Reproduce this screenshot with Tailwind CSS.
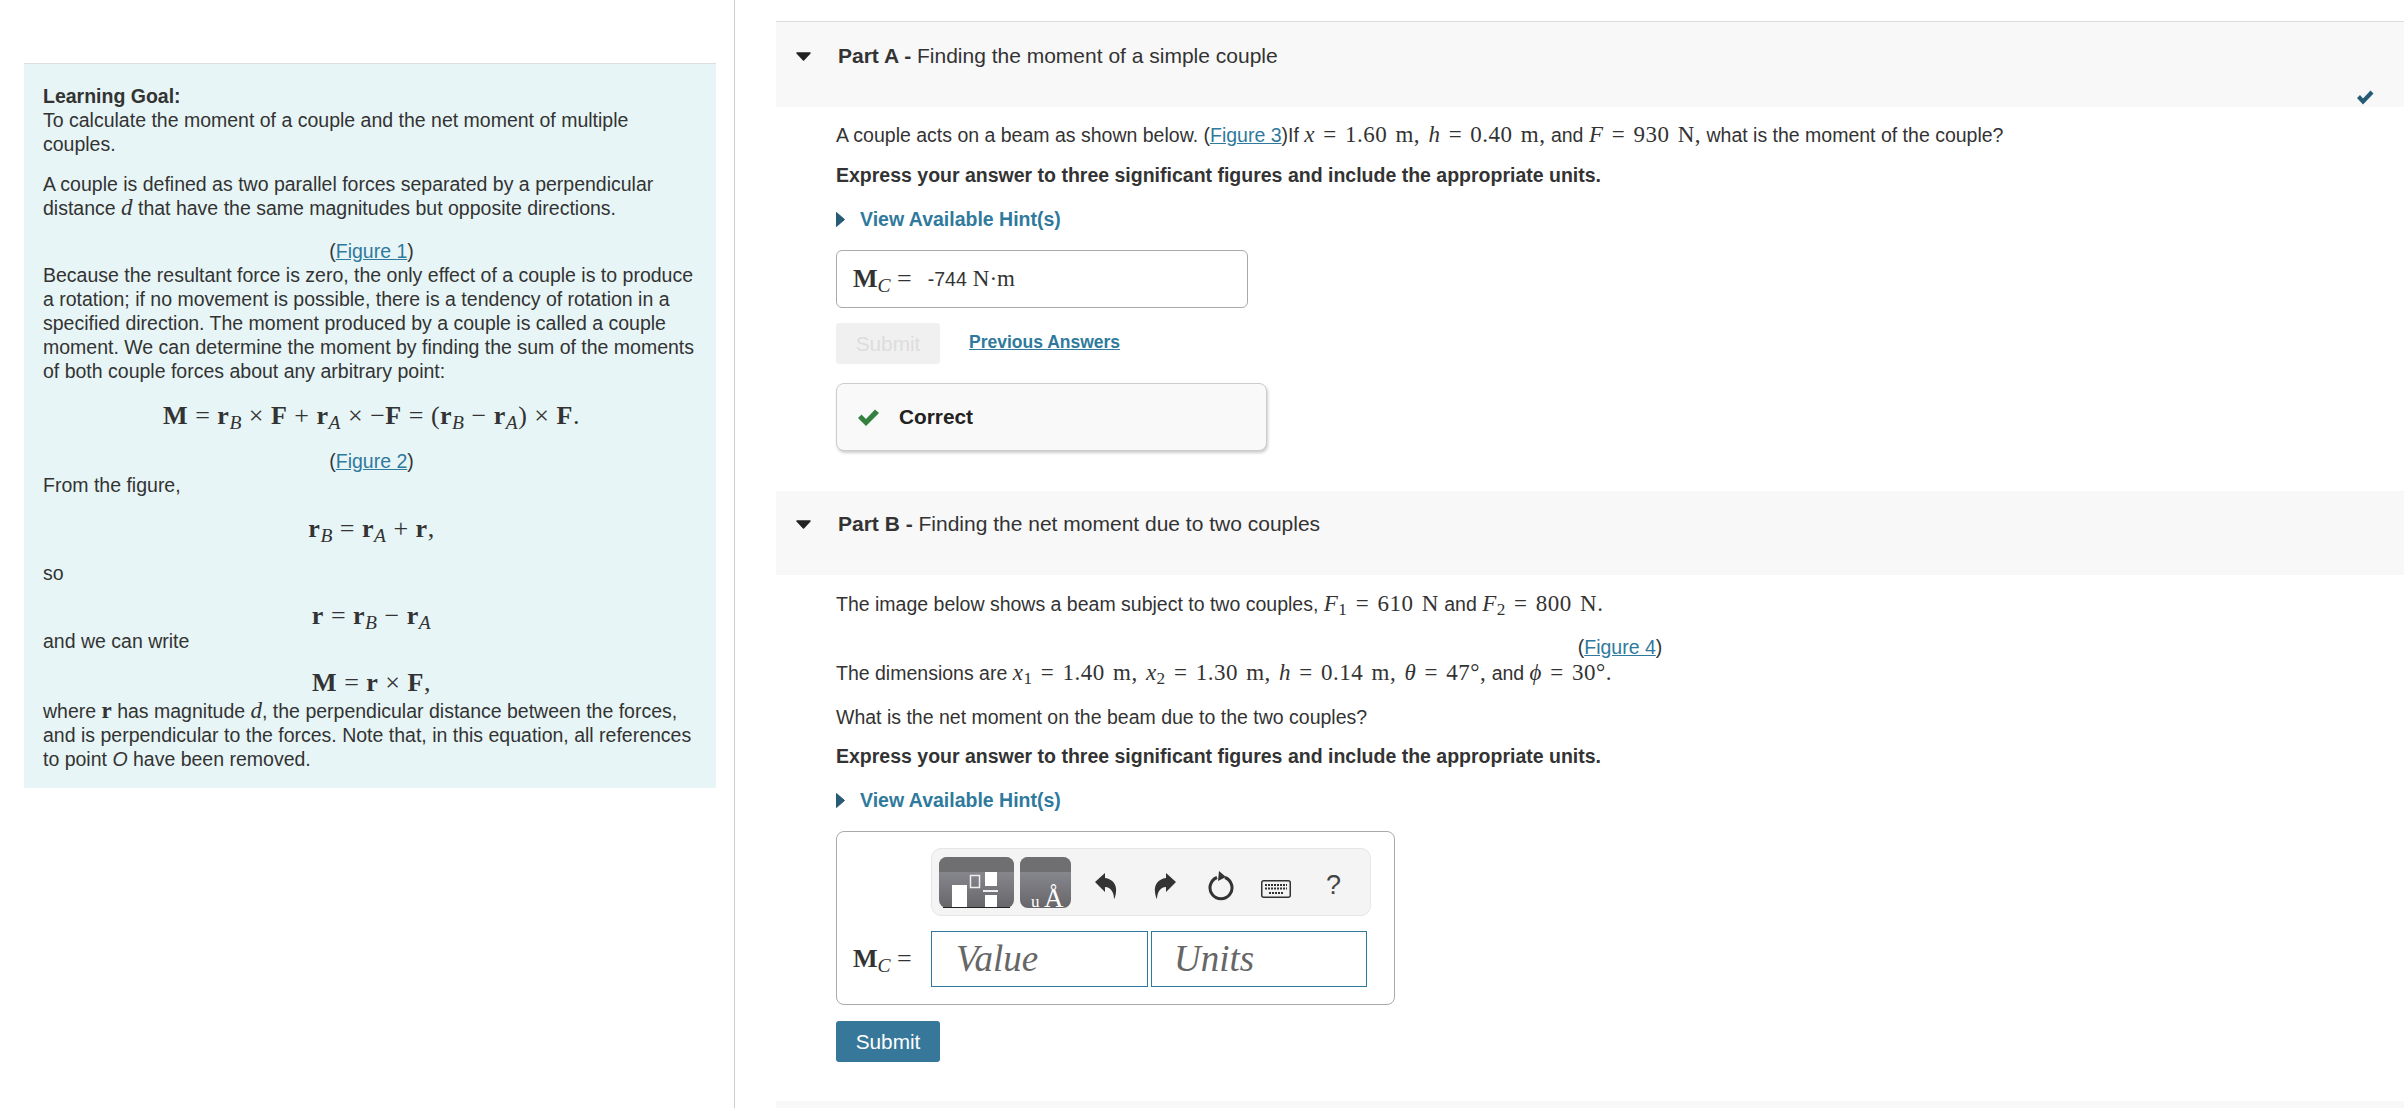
<!DOCTYPE html>
<html lang="en">
<head>
<meta charset="utf-8">
<title>Part A and Part B</title>
<script src="https://cdn.jsdelivr.net/npm/@tailwindcss/browser@4"></script>
</head>
<body class="bg-white">
<div class="flex h-[1108px] w-[2404px] overflow-hidden text-[19.500px] leading-[24px] text-[#333] [font-family:'Liberation_Sans',sans-serif]">

  <!-- left column -->
  <div class="h-full w-[735px] shrink-0 border-r border-[#ccc] pt-[63px] pl-[24px]">
    <div class="h-[725px] w-[692px] border-t border-[#ddd] bg-[#e7f5f6] pt-[20px] pl-[19px] pr-[16px]">
      <p class="font-bold">Learning Goal:</p>
      <p>To calculate the moment of a couple and the net moment of multiple couples.</p>
      <p class="mt-[16px]">A couple is defined as two parallel forces separated by a perpendicular distance <i class="text-[23px] leading-none [font-family:'Liberation_Serif',serif]">d</i> that have the same magnitudes but opposite directions.</p>
      <p class="mt-[19px] text-center">(<a class="text-[#2f7a9c] underline">Figure 1</a>)</p>
      <p>Because the resultant force is zero, the only effect of a couple is to produce a rotation; if no movement is possible, there is a tendency of rotation in a specified direction. The moment produced by a couple is called a couple moment. We can determine the moment by finding the sum of the moments of both couple forces about any arbitrary point:</p>
      <div class="flex h-[66px] items-center justify-center text-[26px] tracking-[0.500px] [font-family:'Liberation_Serif',serif]"><span><b>M</b> = <b>r</b><sub><i>B</i></sub> × <b>F</b> + <b>r</b><sub><i>A</i></sub> × −<b>F</b> = (<b>r</b><sub><i>B</i></sub> − <b>r</b><sub><i>A</i></sub>) × <b>F</b>.</span></div>
      <p class="text-center">(<a class="text-[#2f7a9c] underline">Figure 2</a>)</p>
      <p>From the figure,</p>
      <div class="flex h-[64px] items-center justify-center text-[26px] tracking-[0.500px] [font-family:'Liberation_Serif',serif]"><span><b>r</b><sub><i>B</i></sub> = <b>r</b><sub><i>A</i></sub> + <b>r</b>,</span></div>
      <p>so</p>
      <div class="flex h-[44px] items-end justify-center pb-[1px] text-[26px] tracking-[0.500px] [font-family:'Liberation_Serif',serif]"><span><b>r</b> = <b>r</b><sub><i>B</i></sub> − <b>r</b><sub><i>A</i></sub></span></div>
      <p>and we can write</p>
      <div class="flex h-[46px] items-end justify-center pb-[4px] text-[26px] tracking-[0.500px] [font-family:'Liberation_Serif',serif]"><span><b>M</b> = <b>r</b> × <b>F</b>,</span></div>
      <p>where <b class="text-[23px] leading-none [font-family:'Liberation_Serif',serif]">r</b> has magnitude <i class="text-[23px] leading-none [font-family:'Liberation_Serif',serif]">d</i>, the perpendicular distance between the forces, and is perpendicular to the forces. Note that, in this equation, all references to point <i>O</i> have been removed.</p>
    </div>
  </div>

  <!-- right column -->
  <div class="min-w-0 flex-1 pt-[21px] pl-[41px]">

    <!-- Part A -->
    <div class="relative flex h-[86px] items-start gap-[27px] border-t border-[#ddd] bg-[#f8f8f8] pt-[22px] pl-[20px] text-[21px]">
      <svg class="mt-[8px]" width="15" height="9" viewBox="0 0 15 9"><path d="M1 1H14L7.500 8Z" fill="#222" stroke="#222" stroke-width="1.500" stroke-linejoin="round"/></svg>
      <p><b>Part A -</b> Finding the moment of a simple couple</p>
      <svg class="absolute top-[68px] right-[30px]" width="18" height="15" viewBox="0 0 18 15"><path d="M1 8L4 5L7 8.500L14.500 0.500L17.500 3.500L7 14.500Z" fill="#265b75"/></svg>
    </div>
    <div class="pl-[60px]">
      <p class="mt-[16px]">A couple acts on a beam as shown below. (<a class="text-[#2f7a9c] underline">Figure 3</a>)If <span class="text-[23px] leading-none tracking-[0.500px] [word-spacing:2px] [font-family:'Liberation_Serif',serif]"><i>x</i> = 1.60 m, <i>h</i> = 0.40 m,</span> and <span class="text-[23px] leading-none tracking-[0.500px] [word-spacing:2px] [font-family:'Liberation_Serif',serif]"><i>F</i> = 930 N,</span> what is the moment of the couple?</p>
      <p class="mt-[16px] font-bold">Express your answer to three significant figures and include the appropriate units.</p>
      <div class="mt-[20px] flex items-center gap-[15px] font-bold text-[#2f7a9c]">
        <svg width="9" height="15" viewBox="0 0 9 15"><path d="M0.500 0.500L8.500 7.500L0.500 14.500Z" fill="#265b75" stroke="#265b75" stroke-linejoin="round"/></svg>
        <span>View Available Hint(s)</span>
      </div>
      <div class="mt-[19px] flex h-[58px] w-[412px] items-center rounded-[6px] border border-[#aaa] pl-[16px]">
        <span class="text-[26px] [font-family:'Liberation_Serif',serif]"><b>M</b><sub><i>C</i></sub> =</span>
        <span class="ml-[16px]">-744</span>
        <span class="ml-[6px] text-[23px] [font-family:'Liberation_Serif',serif]">N·m</span>
      </div>
      <div class="mt-[15px] flex items-center gap-[29px]">
        <div class="flex h-[41px] w-[104px] items-center justify-center rounded-[3px] bg-[#f0f0f0] text-[20.800px] text-[#ddd]">Submit</div>
        <a class="mt-[-3px] text-[17.500px] font-bold text-[#2f7a9c] underline">Previous Answers</a>
      </div>
      <div class="mt-[19px] flex h-[68px] w-[431px] items-center gap-[20px] rounded-[8px] border border-[#ccc] bg-[#f9f9f9] pl-[21px] shadow-[1px_2px_3px_rgba(0,0,0,0.2)]">
        <svg width="21" height="17" viewBox="0 0 21 17"><path d="M0 9L3.500 5.500L8 10L17 0.500L21 4L8 17Z" fill="#34803f"/></svg>
        <span class="text-[20.800px] font-bold text-[#222]">Correct</span>
      </div>
    </div>

    <!-- Part B -->
    <div class="mt-[40px] flex h-[84px] items-start gap-[27px] bg-[#f8f8f8] pt-[21px] pl-[20px] text-[21px]">
      <svg class="mt-[8px]" width="15" height="9" viewBox="0 0 15 9"><path d="M1 1H14L7.500 8Z" fill="#222" stroke="#222" stroke-width="1.500" stroke-linejoin="round"/></svg>
      <p><b>Part B -</b> Finding the net moment due to two couples</p>
    </div>
    <div class="pl-[60px]">
      <p class="mt-[17px]">The image below shows a beam subject to two couples, <span class="text-[23px] leading-none tracking-[0.500px] [word-spacing:2px] [font-family:'Liberation_Serif',serif]"><i>F</i><sub>1</sub> = 610 N</span> and <span class="text-[23px] leading-none tracking-[0.500px] [word-spacing:2px] [font-family:'Liberation_Serif',serif]"><i>F</i><sub>2</sub> = 800 N.</span></p>
      <p class="mt-[19px] text-center">(<a class="text-[#2f7a9c] underline">Figure 4</a>)</p>
      <p class="mt-[2px]">The dimensions are <span class="text-[23px] leading-none tracking-[0.500px] [word-spacing:2px] [font-family:'Liberation_Serif',serif]"><i>x</i><sub>1</sub> = 1.40 m, <i>x</i><sub>2</sub> = 1.30 m, <i>h</i> = 0.14 m, <i>θ</i> = 47°,</span> and <span class="text-[23px] leading-none tracking-[0.500px] [word-spacing:2px] [font-family:'Liberation_Serif',serif]"><i>ϕ</i> = 30°.</span></p>
      <p class="mt-[20px]">What is the net moment on the beam due to the two couples?</p>
      <p class="mt-[15px] font-bold">Express your answer to three significant figures and include the appropriate units.</p>
      <div class="mt-[20px] flex items-center gap-[15px] font-bold text-[#2f7a9c]">
        <svg width="9" height="15" viewBox="0 0 9 15"><path d="M0.500 0.500L8.500 7.500L0.500 14.500Z" fill="#265b75" stroke="#265b75" stroke-linejoin="round"/></svg>
        <span>View Available Hint(s)</span>
      </div>

      <div class="mt-[19px] h-[174px] w-[559px] rounded-[8px] border border-[#aaa]">
        <div class="mt-[16px] ml-[94px] flex h-[68px] w-[440px] items-center rounded-[10px] border border-[#e6e6e6] bg-[#f4f4f4] pl-[7px]">
          <svg width="75" height="51" viewBox="0 0 75 51">
            <defs><linearGradient id="pal" x1="0" y1="0" x2="0" y2="1"><stop offset="0" stop-color="#94949c"/><stop offset="1" stop-color="#66666a"/></linearGradient></defs>
            <rect width="75" height="51" rx="8" fill="url(#pal)"/>
            <path d="M0 15V8A8 8 0 0 1 8 0H67A8 8 0 0 1 75 8V15Z" fill="#6f6f71"/>
            <rect x="13" y="28" width="15" height="23" fill="#fff"/>
            <rect x="31.500" y="18.500" width="9" height="12" fill="none" stroke="#eee" stroke-width="1.500"/>
            <rect x="46" y="15" width="12" height="14" fill="#fff"/>
            <rect x="44" y="33" width="15" height="2" fill="#eee"/>
            <rect x="46" y="38" width="12" height="13" fill="#fff"/>
            <path d="M4 50.500H71" stroke="#222" stroke-width="1"/>
          </svg>
          <svg class="ml-[6px] overflow-visible" width="51" height="51" viewBox="0 0 51 51">
            <rect width="51" height="51" rx="8" fill="url(#pal)"/>
            <path d="M0 15V8A8 8 0 0 1 8 0H43A8 8 0 0 1 51 8V15Z" fill="#6f6f71"/>
            <text x="11" y="50" font-family="Liberation Serif" font-size="17" fill="#fff">u</text>
            <text x="24" y="50" font-family="Liberation Serif" font-size="27" fill="#fff">Å</text>
          </svg>
          <svg class="ml-[24px] mt-[8px]" width="22" height="28" viewBox="0 0 22 28"><path d="M0 10L10 1V6C18 7 22 13 21 20C20.700 23 20 26 19 27C19 21 16 15 10 15V20Z" fill="#333"/></svg>
          <svg class="ml-[37px] mt-[8px]" width="22" height="28" viewBox="0 0 22 28"><path d="M22 10L12 1V6C4 7 0 13 1 20C1.300 23 2 26 3 27C3 21 6 15 12 15V20Z" fill="#333"/></svg>
          <svg class="ml-[32px] mt-[8px]" width="26" height="30" viewBox="0 0 26 30"><path d="M9 6.500A11 11 0 1 0 17 6.500" fill="none" stroke="#333" stroke-width="3"/><path d="M11 0L18 6L10 10Z" fill="#333"/></svg>
          <svg class="ml-[27px] mt-[14px]" width="30" height="18" viewBox="0 0 30 18"><rect x="0.750" y="0.750" width="28.500" height="16.500" rx="2" fill="#f4f4f4" stroke="#333" stroke-width="1.500"/><path d="M4 5H26M4 8.500H26M8 13H22" stroke="#333" stroke-width="2" stroke-dasharray="2 1"/></svg>
          <span class="ml-[35px] mt-[6px] text-[27px] text-[#444]">?</span>
        </div>
        <div class="mt-[15px] flex items-center pl-[16px]">
          <span class="w-[78px] text-[26px] [font-family:'Liberation_Serif',serif]"><b>M</b><sub><i>C</i></sub> =</span>
          <div class="flex h-[56px] w-[217px] items-center border border-[#2f7a9c] pl-[24px] text-[37px] text-[#666] italic [font-family:'Liberation_Serif',serif]">Value</div>
          <div class="ml-[3px] flex h-[56px] w-[216px] items-center border border-[#2f7a9c] pl-[22px] text-[37px] text-[#666] italic [font-family:'Liberation_Serif',serif]">Units</div>
        </div>
      </div>

      <div class="mt-[16px] flex h-[41px] w-[104px] items-center justify-center rounded-[3px] bg-[#37789a] text-[20.800px] text-white">Submit</div>
    </div>

    <!-- Part C header, cut off by the window -->
    <div class="mt-[39px] h-[9px] bg-[#f8f8f8]"></div>
  </div>
</div>
</body>
</html>
